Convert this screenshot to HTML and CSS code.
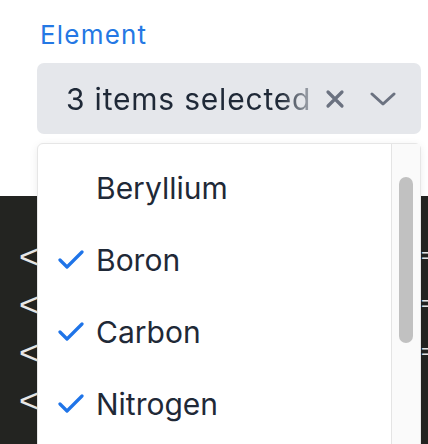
FILE: index.html
```html
<!DOCTYPE html>
<html>
<head>
<meta charset="utf-8">
<link rel="stylesheet" href="styles.css">
</head>
<body>
<div class="page">
  <div class="field">
    <label class="label">Element</label>
    <div class="select">
      <span class="value">3 items selected</span>
      <svg class="clear" width="20" height="20" viewBox="0 0 20 20"><path d="M3 3 L17 17 M17 3 L3 17" stroke="#6b7280" stroke-width="3.2" stroke-linecap="round" fill="none"/></svg>
      <svg class="chev" width="26" height="14" viewBox="0 0 26 14"><path d="M2 2 L13 12 L24 2" stroke="#6b7280" stroke-width="3" stroke-linecap="round" stroke-linejoin="round" fill="none"/></svg>
    </div>
  </div>
  <div class="code">
    <div class="line"><span class="lt">&lt;</span><span class="tail">=</span></div>
    <div class="line"><span class="lt">&lt;</span><span class="tail">=</span></div>
    <div class="line"><span class="lt">&lt;</span><span class="tail">=</span></div>
    <div class="line"><span class="lt">&lt;</span><span class="tail"></span></div>
  </div>
  <div class="menu">
    <ul class="options">
      <li class="option"><span class="check"></span><span>Beryllium</span></li>
      <li class="option"><span class="check"><svg width="26" height="20" viewBox="0 0 26 20"><path d="M2 10 L9 17 L24 2" stroke="#1f74e8" stroke-width="3.2" stroke-linecap="round" stroke-linejoin="round" fill="none"/></svg></span><span>Boron</span></li>
      <li class="option"><span class="check"><svg width="26" height="20" viewBox="0 0 26 20"><path d="M2 10 L9 17 L24 2" stroke="#1f74e8" stroke-width="3.2" stroke-linecap="round" stroke-linejoin="round" fill="none"/></svg></span><span>Carbon</span></li>
      <li class="option"><span class="check"><svg width="26" height="20" viewBox="0 0 26 20"><path d="M2 10 L9 17 L24 2" stroke="#1f74e8" stroke-width="3.2" stroke-linecap="round" stroke-linejoin="round" fill="none"/></svg></span><span>Nitrogen</span></li>
    </ul>
    <div class="track"><div class="thumb"></div></div>
  </div>
</div>
</body>
</html>
```
FILE: styles.css
```css
html, body {
  margin: 0;
  padding: 0;
  background: #ffffff;
  font-family: Inter, "Noto Sans", sans-serif;
  overflow: hidden;
}
.page {
  position: relative;
  width: 428px;
  height: 444px;
  overflow: hidden;
}
.field {
  padding: 19px 7px 0 37px;
  height: 196px;
  box-sizing: border-box;
}
.label {
  display: block;
  color: #2478e4;
  font-size: 26px;
  line-height: 32px;
  padding-left: 3px;
  letter-spacing: 1.2px;
}
.select {
  margin-top: 12px;
  height: 71px;
  background: #e5e7eb;
  border-radius: 7px;
  display: flex;
  align-items: center;
  padding-left: 29px;
  box-sizing: border-box;
}
.value {
  width: 246px;
  white-space: nowrap;
  overflow: hidden;
  font-size: 30px;
  letter-spacing: 0.8px;
  color: #1f2937;
  -webkit-mask-image: linear-gradient(to right, #000 214px, rgba(0,0,0,0.3) 246px);
  mask-image: linear-gradient(to right, #000 214px, rgba(0,0,0,0.3) 246px);
}
.clear {
  margin-left: 13px;
}
.chev {
  margin-left: 25px;
}
.code {
  background: #232421;
  height: 248px;
  padding-top: 36px;
  box-sizing: border-box;
  color: #e8e8e8;
  font-family: "Liberation Sans", sans-serif;
}
.line {
  height: 48px;
  display: flex;
  align-items: center;
  justify-content: space-between;
  padding-left: 19px;
  overflow: hidden;
}
.lt {
  font-size: 34px;
  line-height: 40px;
}
.tail {
  width: 7px;
  overflow: hidden;
  font-size: 22px;
}
.menu {
  position: absolute;
  left: 37px;
  top: 143px;
  width: 384px;
  height: 320px;
  background: #ffffff;
  border: 1px solid #e6e6e6;
  border-radius: 6px;
  box-sizing: border-box;
  box-shadow: 0 2px 8px rgba(0,0,0,0.08);
  display: flex;
}
.options {
  list-style: none;
  margin: 0;
  padding: 8px 0 0 0;
  flex: 1;
}
.option {
  height: 72px;
  display: flex;
  align-items: center;
  font-size: 30px;
  color: #1f2937;
}
.check {
  width: 26px;
  height: 20px;
  margin-left: 20px;
  margin-right: 12px;
  display: flex;
}
.track {
  width: 29px;
  background: #fafafa;
  border-left: 1px solid #e4e4e4;
  padding: 33px 7px 0 7px;
  box-sizing: border-box;
}
.thumb {
  height: 166px;
  background: #c1c1c1;
  border-radius: 7px;
}
```
